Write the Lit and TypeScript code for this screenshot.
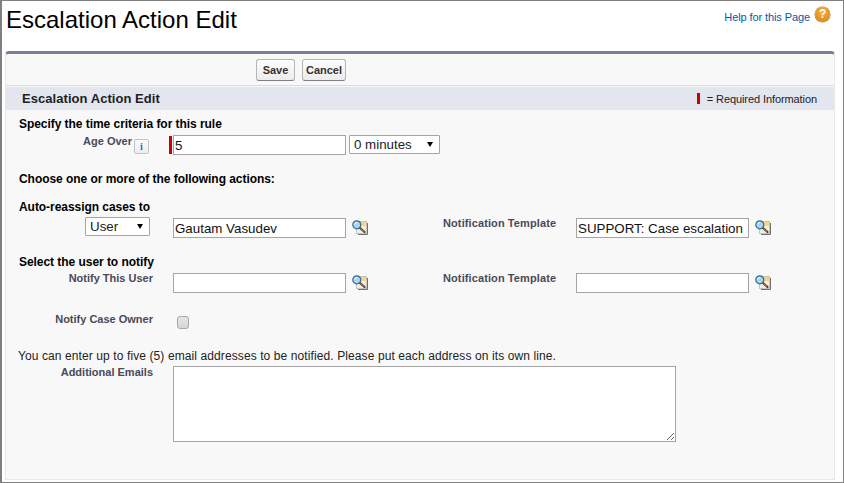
import { LitElement, html, css } from "lit";
import { customElement } from "lit/decorators.js";

const lookup = html`<svg class="lookup" width="16" height="15" viewBox="0 0 16 15">
  <rect x="4.5" y="1.5" width="10" height="12" fill="#f1eee2" stroke="#c4c4bc"/>
  <rect x="8" y="2" width="6" height="4" fill="#fbd47c"/>
  <path d="M6 14.5H15.5V3" fill="none" stroke="#707070"/>
  <path d="M8 8L12.5 12" stroke="#5b3a26" stroke-width="2.2" stroke-linecap="round"/>
  <path d="M8.5 8.5L12 11.5" stroke="#d8a078" stroke-width="0.7"/>
  <circle cx="4.8" cy="4.8" r="4" fill="#a9d3ee" stroke="#2f6c97" stroke-width="1.2"/>
  <path d="M2.5 4.5A2.5 2.5 0 0 1 5 2.5" fill="none" stroke="#fff" stroke-width="1"/>
</svg>`;

@customElement("app-root")
export class AppRoot extends LitElement {
  static styles = css`
    :host {
      display: block;
      box-sizing: border-box;
      width: 844px;
      height: 483px;
      background: #fff;
      border: 1px solid #808080;
      border-left-width: 2px;
      font-family: "Liberation Sans", Arial, sans-serif;
      color: #000;
      overflow: hidden;
    }
    .top {
      height: 50px;
      display: flex;
      justify-content: space-between;
      padding-left: 5px;
      padding-right: 13px;
      box-sizing: border-box;
    }
    h1 {
      margin: 0 0 0 -1px;
      padding-top: 3px;
      font-size: 24px;
      line-height: 32px;
      font-weight: 400;
    }
    .help {
      display: flex;
      align-items: flex-start;
      gap: 5px;
      padding-top: 6px;
      font-size: 11px;
      line-height: 20px;
      color: #015ba7;
      letter-spacing: -0.1px;
    }
    .q {
      width: 15px;
      height: 15px;
      border-radius: 50%;
      background: radial-gradient(circle at 50% 35%, #f4b23c, #d97f0e);
      color: #fff;
      font-size: 12px;
      font-weight: 700;
      line-height: 15px;
      text-align: center;
      box-shadow: 0 0 0 0.5px #b8710f;
    }
    .panel {
      margin-left: 3px;
      width: 830px;
      height: 429px;
      box-sizing: border-box;
      border: 1px solid #e8e8e8;
      border-top: 3px solid #777f99;
      border-radius: 4px 4px 0 0;
      background: #f8f8f8;
    }
    .buttons {
      height: 32px;
      box-sizing: border-box;
      padding: 5px 0 0 250px;
      display: flex;
      gap: 7px;
      border-bottom: 1px solid #dbdbdb;
      align-items: flex-start;
    }
    .btn {
      height: 22px;
      box-sizing: border-box;
      padding: 0 4px;
      border: 1px solid #b5b5b5;
      border-bottom-color: #7f7f7f;
      border-radius: 3px;
      background: linear-gradient(#fdfdfd, #ececec);
      color: #333;
      font: 700 11px/20px "Liberation Sans", Arial, sans-serif;
    }
    .save { width: 39px; }
    .cancel { width: 44px; padding: 0; }
    .head {
      margin-top: 1px;
      height: 23px;
      background: #e3e6ef;
      display: flex;
      justify-content: space-between;
      align-items: center;
      padding: 0 17px 0 16px;
    }
    .head h2 {
      margin: 0;
      font-size: 13px;
      font-weight: 700;
      color: #222;
      letter-spacing: 0.05px;
    }
    .req {
      display: flex;
      align-items: center;
      font-size: 11px;
      color: #222;
      gap: 7px;
      letter-spacing: -0.09px;
    }
    .req i {
      width: 3px;
      height: 11px;
      background: #c00;
    }
    .form { position: relative; }
    .title {
      font-size: 12px;
      font-weight: 700;
      line-height: 14px;
      color: #000;
      padding-left: 13px;
      letter-spacing: -0.05px;
    }
    .row {
      display: grid;
      grid-template-columns: 147px 20px 270px 133px 1fr;
      align-items: start;
    }
    .lab {
      font-size: 11px;
      font-weight: 700;
      color: #4a4a56;
      text-align: right;
      line-height: 14px;
      margin-top: -2px;
    }
    .lab2 { text-align: left; letter-spacing: 0.1px; }
    .field { display: flex; align-items: flex-start; }
    input.text {
      width: 173px;
      height: 20px;
      box-sizing: border-box;
      border: 1px solid #a5a5a5;
      background: #fff;
      font: 13.33px "Liberation Sans", Arial, sans-serif;
      color: #111;
      padding: 0 1px;
      margin: 0;
      outline: none;
    }
    .lookup { margin: 2px 0 0 6px; flex: none; }
    .t1 { padding-top: 7px; }
    .age { margin-top: 4px; }
    .agelabel { position: relative; margin-top: 0; display: flex; justify-content: flex-end; }
    .agelab { position: relative; top: -1px; margin-right: 21px; }
    .info {
      position: absolute;
      left: 128px;
      top: 4px;
      width: 15px;
      height: 15px;
      box-sizing: border-box;
      border: 1px solid #c3c3c3;
      border-radius: 2px;
      background: linear-gradient(#fbfbfb, #e9eef3);
      color: #1f6fb8;
      font: 700 10px/13px "Liberation Serif", serif;
      text-align: center;
    }
    .reqfield { position: relative; }
    .reqfield::before {
      content: "";
      position: absolute;
      left: -4px;
      top: 1px;
      width: 3px;
      height: 18px;
      background: #c00;
    }
    .selwrap { position: relative; display: inline-block; }
    .selwrap::after {
      content: "";
      position: absolute;
      right: 7px;
      top: 7px;
      border-left: 3px solid transparent;
      border-right: 3px solid transparent;
      border-top: 5px solid #000;
      pointer-events: none;
    }
    select {
      appearance: none;
      -webkit-appearance: none;
      box-sizing: border-box;
      height: 19px;
      border: 1px solid #a5a5a5;
      border-radius: 1px;
      background: #fff;
      font: 13.33px "Liberation Sans", Arial, sans-serif;
      color: #222;
      padding: 0 4px;
      margin: 0;
      outline: none;
      display: block;
    }
    .s1 { margin-left: 3px; }
    .s1 select { width: 91px; }
    .s2 { width: 65px; }
    .t2 { margin-top: 17px; }
    .t3 { margin-top: 14px; }
    .usersel { display: flex; justify-content: flex-end; margin: -1px 3px 0 0; }
    .r1 { margin-top: 4px; }
    .t4 { margin-top: 17px; padding-left: 13px; }
    .r2 { margin-top: 4px; }
    .r3 { margin-top: 19px; }
    .r3 .lab { margin-top: 0; }
    .cb {
      width: 12px;
      height: 13px;
      box-sizing: border-box;
      margin: 4px 0 0 4px;
      border: 1px solid #a8a8a8;
      border-radius: 3px;
      background: linear-gradient(#e6e6e6, #d6d6d6);
    }
    .note {
      margin-top: 20px;
      padding-left: 12px;
      font-size: 12px;
      line-height: 14px;
      color: #222;
      letter-spacing: 0.1px;
    }
    .r4 { margin-top: 3px; }
    .r4 .lab { margin-top: -1px; }
    .wide { grid-column: 3 / 6; }
    textarea {
      display: block;
      width: 503px;
      height: 76px;
      box-sizing: border-box;
      border: 1px solid #a5a5a5;
      background: #fff;
      margin: 0;
      outline: none;
      padding: 2px;
      font: 13.33px "Liberation Sans", Arial, sans-serif;
    }
  `;

  render() {
    return html`
      <div class="top">
        <h1>Escalation Action Edit</h1>
        <div class="help"><span>Help for this Page</span><div class="q">?</div></div>
      </div>
      <div class="panel">
        <div class="buttons">
          <button class="btn save">Save</button>
          <button class="btn cancel">Cancel</button>
        </div>
        <div class="head">
          <h2>Escalation Action Edit</h2>
          <div class="req"><i></i><span>= Required Information</span></div>
        </div>
        <div class="form">
          <div class="title t1">Specify the time criteria for this rule</div>
          <div class="row age">
            <div class="lab agelabel"><span class="agelab">Age Over</span><span class="info">i</span></div>
            <div></div>
            <div class="field reqfield">
              <input class="text" value="5" />
              <div class="selwrap s1"><select><option>0 minutes</option></select></div>
            </div>
          </div>
          <div class="title t2">Choose one or more of the following actions:</div>
          <div class="title t3">Auto-reassign cases to</div>
          <div class="row r1">
            <div class="usersel"><div class="selwrap"><select class="s2"><option>User</option></select></div></div>
            <div></div>
            <div class="field"><input class="text" value="Gautam Vasudev" />${lookup}</div>
            <div class="lab lab2">Notification Template</div>
            <div class="field"><input class="text" value="SUPPORT: Case escalation" />${lookup}</div>
          </div>
          <div class="title t4">Select the user to notify</div>
          <div class="row r2">
            <div class="lab">Notify This User</div>
            <div></div>
            <div class="field"><input class="text" />${lookup}</div>
            <div class="lab lab2">Notification Template</div>
            <div class="field"><input class="text" />${lookup}</div>
          </div>
          <div class="row r3">
            <div class="lab">Notify Case Owner</div>
            <div></div>
            <div><div class="cb"></div></div>
          </div>
          <div class="note">You can enter up to five (5) email addresses to be notified. Please put each address on its own line.</div>
          <div class="row r4">
            <div class="lab">Additional Emails</div>
            <div></div>
            <div class="wide"><textarea></textarea></div>
          </div>
        </div>
      </div>
    `;
  }
}
